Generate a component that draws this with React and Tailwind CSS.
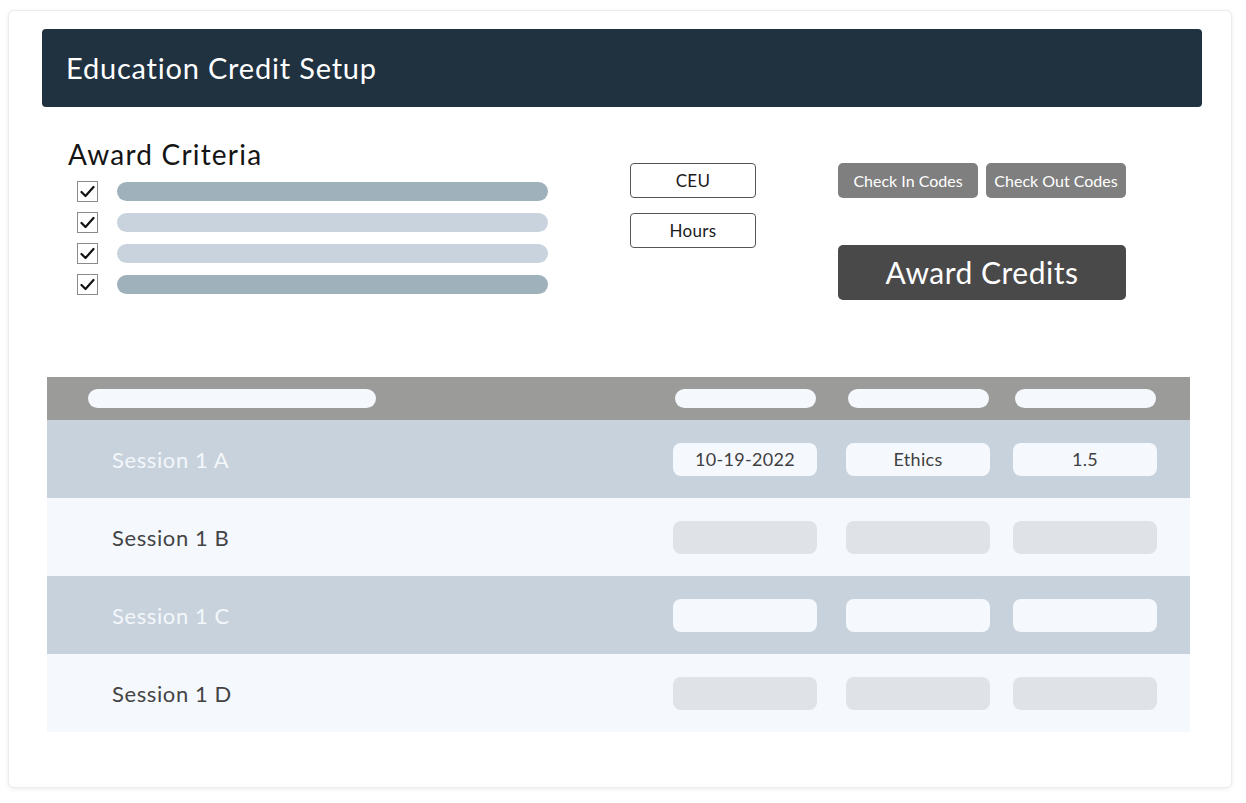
import React from 'react'

const FONT = { fontFamily: 'Lato, "Open Sans", sans-serif' }

const criteria = ['bg-[#9fb1ba]', 'bg-[#c8d3dd]', 'bg-[#c8d3dd]', 'bg-[#9fb1ba]']

const sessions = [
  { name: 'Session 1 A', dark: true, values: ['10-19-2022', 'Ethics', '1.5'] },
  { name: 'Session 1 B', dark: false },
  { name: 'Session 1 C', dark: true },
  { name: 'Session 1 D', dark: false },
]

const Check = () => (
  <div className="w-[21px] h-[21px] border border-[#8a8a8a] bg-white flex items-center justify-center">
    <svg width="15" height="13" viewBox="0 0 15 13" fill="none">
      <path d="M1.5 7 L5.5 11 L13.5 2" stroke="#111" strokeWidth="2.2" strokeLinecap="round" strokeLinejoin="round" />
    </svg>
  </div>
)

const Cell = ({ dark, value }) => (
  <div
    className={`w-[144px] h-[33px] rounded-[8px] flex items-center justify-center text-[18px] tracking-[0.3px] text-[#3f3f42] ${
      dark ? 'bg-[#f5f9fd]' : 'bg-[#dfe2e7]'
    }`}
  >
    {value}
  </div>
)

export default function App() {
  return (
    <div className="w-[1246px] h-[803px] bg-white pt-[10px] pl-[8px]" style={FONT}>
      <div className="w-[1224px] h-[778px] bg-white rounded-[6px] border border-[#ececec] shadow-[0_1px_4px_rgba(0,0,0,0.08)] pt-[18px] pl-[33px]">
        {/* header */}
        <div className="w-[1160px] h-[78px] bg-[#203140] rounded-[4px] flex items-center pl-[24px]">
          <h1 className="text-[29px] text-white tracking-[0.8px]">Education Credit Setup</h1>
        </div>

        {/* criteria + actions */}
        <div className="flex mt-[29px] h-[241px]">
          <div className="w-[588px] pl-[26px]">
            <h2 className="text-[28px] text-[#141414] leading-[36px] tracking-[1.2px]">Award Criteria</h2>
            <div className="mt-[9px] flex flex-col gap-[10px] pl-[9px]">
              {criteria.map((c, i) => (
                <div key={i} className="flex items-center gap-[19px]">
                  <Check />
                  <div className={`w-[431px] h-[19px] rounded-full ${c}`} />
                </div>
              ))}
            </div>
          </div>

          <div className="w-[208px] pt-[27px] flex flex-col gap-[15px]">
            <button className="w-[126px] h-[35px] border border-[#555] rounded-[4px] text-[17px] tracking-[0.3px] text-[#1a1a1a]">CEU</button>
            <button className="w-[126px] h-[35px] border border-[#555] rounded-[4px] text-[17px] tracking-[0.3px] text-[#1a1a1a]">Hours</button>
          </div>

          <div className="pt-[27px]">
            <div className="flex gap-[8px]">
              <button className="w-[140px] h-[35px] bg-[#7f7f7f] rounded-[5px] text-[16px] text-white">Check In Codes</button>
              <button className="w-[140px] h-[35px] bg-[#7f7f7f] rounded-[5px] text-[16px] text-white">Check Out Codes</button>
            </div>
            <button className="mt-[47px] w-[288px] h-[55px] bg-[#4a494a] rounded-[5px] text-[30px] tracking-[0.5px] text-white">
              Award Credits
            </button>
          </div>
        </div>

        {/* table */}
        <div className="ml-[5px] w-[1143px]">
          <div className="h-[43px] bg-[#9b9b99] flex items-center pl-[41px]">
            <div className="w-[288px] h-[19px] rounded-full bg-[#f5f9fd]" />
            <div className="ml-[297px] w-[144px] flex justify-center">
              <div className="w-[141px] h-[19px] rounded-full bg-[#f5f9fd]" />
            </div>
            <div className="ml-[29px] w-[144px] flex justify-center">
              <div className="w-[141px] h-[19px] rounded-full bg-[#f5f9fd]" />
            </div>
            <div className="ml-[23px] w-[144px] flex justify-center">
              <div className="w-[141px] h-[19px] rounded-full bg-[#f5f9fd]" />
            </div>
          </div>
          {sessions.map((s) => (
            <div
              key={s.name}
              className={`h-[78px] flex items-center pl-[65px] ${s.dark ? 'bg-[#c8d2dc]' : 'bg-[#f5f9fd]'}`}
            >
              <div className={`w-[561px] text-[22px] tracking-[0.6px] ${s.dark ? 'text-[#f3f7fb]' : 'text-[#444446]'}`}>{s.name}</div>
              <Cell dark={s.dark} value={s.values?.[0]} />
              <div className="ml-[29px]">
                <Cell dark={s.dark} value={s.values?.[1]} />
              </div>
              <div className="ml-[23px]">
                <Cell dark={s.dark} value={s.values?.[2]} />
              </div>
            </div>
          ))}
        </div>
      </div>
    </div>
  )
}
